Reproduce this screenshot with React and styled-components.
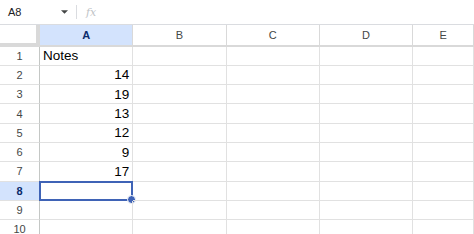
import styled, { createGlobalStyle } from "styled-components";

const GlobalStyle = createGlobalStyle`
  html, body {
    margin: 0;
    padding: 0;
    background: #ffffff;
    overflow: hidden;
  }
  body {
    font-family: "Liberation Sans", Arial, sans-serif;
  }
`;

const cols = ["A", "B", "C", "D", "E"];
const data = ["Notes", 14, 19, 13, 12, 9, 17, "", "", ""];

function App() {
  return (
    <>
      <GlobalStyle />
      <Page>
        <FormulaBar>
          <NameBox>A8</NameBox>
          <Caret viewBox="0 0 8 4">
            <path d="M0 0h8L4 4z" />
          </Caret>
          <Divider />
          <Fx>fx</Fx>
        </FormulaBar>
        <Grid>
          <Corner />
          {cols.map((c, i) => (
            <ColHeader key={c} $active={i === 0}>
              {c}
            </ColHeader>
          ))}
          {data.map((v, r) => (
            <Row key={r}>
              <RowHeader $active={r === 7}>{r + 1}</RowHeader>
              {cols.map((c, i) => (
                <Cell key={c} $num={typeof v === "number"}>
                  {i === 0 ? v : ""}
                  {i === 0 && r === 7 && (
                    <Selection>
                      <Handle />
                    </Selection>
                  )}
                </Cell>
              ))}
            </Row>
          ))}
        </Grid>
      </Page>
    </>
  );
}

export default App;

const Page = styled.div`
  width: 474px;
  height: 234px;
  overflow: hidden;
`;

const FormulaBar = styled.div`
  height: 24px;
  display: flex;
  align-items: center;
  border-bottom: 1px solid #dadce0;
  padding-left: 8px;
  box-sizing: content-box;
`;

const NameBox = styled.span`
  font-size: 11px;
  color: #202124;
  width: 53px;
`;

const Caret = styled.svg`
  width: 7px;
  height: 4px;
  fill: #444746;
`;

const Divider = styled.div`
  width: 1px;
  height: 14px;
  background: #dadce0;
  margin: 0 9px 0 8px;
`;

const Fx = styled.span`
  font-family: "DejaVu Serif", serif;
  font-style: italic;
  font-size: 11px;
  color: #c0c3c6;
`;

const Grid = styled.div`
  display: grid;
  grid-template-columns: 40px repeat(4, 93.3px) 1fr;
  grid-auto-rows: 19.3px;
  grid-template-rows: 21.5px;
`;

const Corner = styled.div`
  background: #ffffff;
  border-right: 4px solid #d9d9d9;
  border-bottom: 4px solid #d9d9d9;
  box-sizing: border-box;
`;

const ColHeader = styled.div`
  display: flex;
  align-items: center;
  justify-content: center;
  font-size: 11px;
  color: ${(p) => (p.$active ? "#0b2b6b" : "#444746")};
  font-weight: ${(p) => (p.$active ? 700 : 400)};
  background: ${(p) => (p.$active ? "#d3e3fd" : "#ffffff")};
  border-right: 1px solid #d9d9d9;
  border-bottom: 2px solid #d9d9d9;
  box-sizing: border-box;
`;

const Row = styled.div`
  display: contents;
`;

const RowHeader = styled.div`
  display: flex;
  align-items: center;
  justify-content: center;
  font-size: 11px;
  color: ${(p) => (p.$active ? "#0b2b6b" : "#444746")};
  font-weight: ${(p) => (p.$active ? 700 : 400)};
  background: ${(p) => (p.$active ? "#d3e3fd" : "#ffffff")};
  border-right: 1px solid #c4c7c5;
  border-bottom: 1px solid #e1e1e1;
  box-sizing: border-box;
`;

const Cell = styled.div`
  position: relative;
  display: flex;
  align-items: center;
  justify-content: ${(p) => (p.$num ? "flex-end" : "flex-start")};
  padding: 0 3px 0 3px;
  font-size: 13.5px;
  color: #000000;
  border-right: 1px solid #e1e1e1;
  border-bottom: 1px solid #e1e1e1;
  box-sizing: border-box;
`;

const Selection = styled.div`
  position: absolute;
  left: -1px;
  top: -1px;
  right: -1px;
  bottom: -1px;
  border: 2px solid #3f63b6;
`;

const Handle = styled.div`
  position: absolute;
  right: -5px;
  bottom: -5px;
  width: 7px;
  height: 7px;
  border-radius: 50%;
  background: #3f63b6;
  border: 1px solid #ffffff;
`;
